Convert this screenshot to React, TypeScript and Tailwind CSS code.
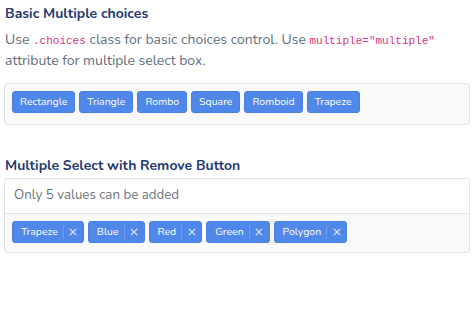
import React from "react";

const font = { fontFamily: '"Nunito", Lato, "Noto Sans", sans-serif' };

function Chip({ label }: { label: string }) {
  return (
    <div className="flex h-[22px] items-center rounded-[3px] border border-[#4a80e2] bg-[#5088e9] px-[7px] text-[10.5px] text-white">
      {label}
    </div>
  );
}

function Tag({ label }: { label: string }) {
  return (
    <div className="flex h-[22px] items-center rounded-[3px] border border-[#4a80e2] bg-[#5088e9] text-[10.5px] text-white">
      <span className="pl-[8px] pr-[5px]">{label}</span>
      <span className="flex h-[14px] w-[20px] items-center justify-center border-l border-[#6f9ced]">
        <svg width="8" height="8" viewBox="0 0 10 10">
          <path d="M1 1L9 9M9 1L1 9" stroke="#e3ecff" strokeWidth="1.4" />
        </svg>
      </span>
    </div>
  );
}

export default function App() {
  return (
    <div className="h-[315px] w-[474px] bg-white px-[4px] pt-[5px]" style={font}>
      <h5 className="pl-[1px] text-[14px] font-bold leading-[18px] text-[#25396f]">Basic Multiple choices</h5>
      <p className="mt-[6px] pl-[1px] text-[14px] leading-[21px] text-[#607080]">
        Use <code className="font-['Liberation_Mono',monospace] text-[11px] leading-[14px] text-[#d63384]">.choices</code> class for basic choices control. Use{" "}
        <code className="font-['Liberation_Mono',monospace] text-[11px] leading-[14px] text-[#d63384]">multiple="multiple"</code> attribute for multiple select box.
      </p>
      <div className="mt-[12px] flex h-[42px] w-[466px] items-start gap-[4px] rounded-[3px] border border-[#dfe3e7] bg-[#f9f9f9] pl-[7px] pt-[7px]">
        {["Rectangle", "Triangle", "Rombo", "Square", "Romboid", "Trapeze"].map((l) => (
          <Chip key={l} label={l} />
        ))}
      </div>
      <h5 className="mt-[32px] pl-[1px] text-[14px] font-bold leading-[18px] text-[#25396f]">
        Multiple Select with Remove Button
      </h5>
      <div className="mt-[3px] w-[466px] overflow-hidden rounded-[3px] border border-[#dfe3e7]">
        <div className="flex h-[34px] items-center bg-white pl-[9px] text-[13.3px] text-[#6c757d]">
          Only 5 values can be added
        </div>
        <div className="flex h-[39px] items-start gap-[4px] border-t border-[#dfe3e7] bg-[#f9f9f9] pl-[7px] pt-[7px]">
          {["Trapeze", "Blue", "Red", "Green", "Polygon"].map((l) => (
            <Tag key={l} label={l} />
          ))}
        </div>
      </div>
    </div>
  );
}
